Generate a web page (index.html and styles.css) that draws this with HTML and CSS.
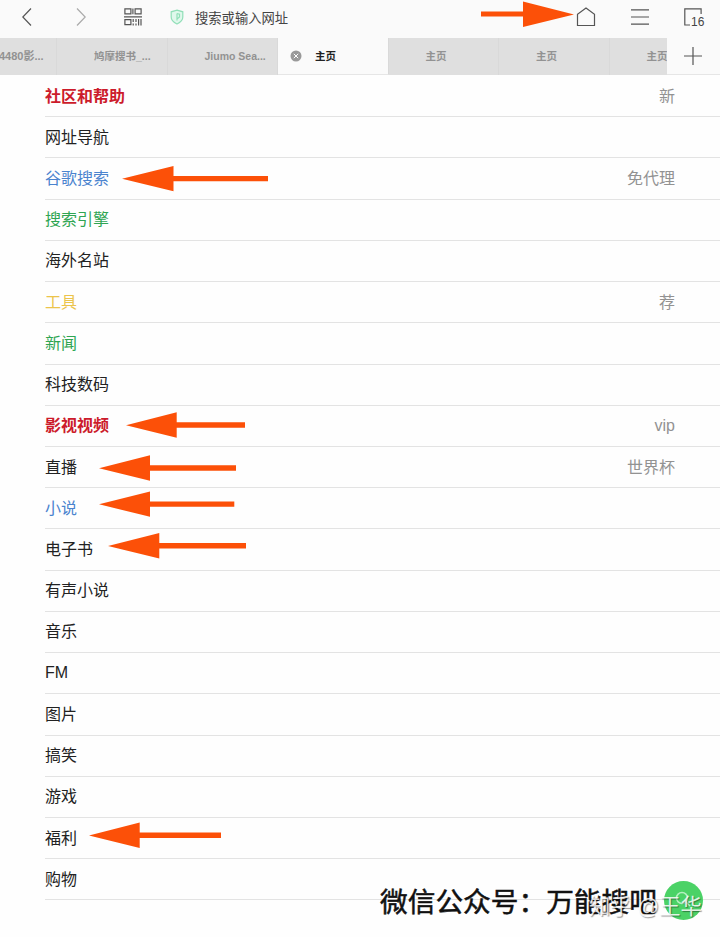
FILE: index.html
```html
<!DOCTYPE html>
<html lang="zh-CN">
<head>
  <meta charset="UTF-8">
  <meta name="viewport" content="width=device-width, initial-scale=1.0">
  <title>主页</title>
  <link rel="stylesheet" href="styles.css">
</head>
<body>
  <!-- 工具栏 -->
  <header class="toolbar">
    <svg class="icon back" width="10" height="18" viewBox="0 0 10 18"><path d="M9 .5.8 9 9 17.5"/></svg>
    <svg class="icon forward" width="10" height="18" viewBox="0 0 10 18"><path d="M1 .5 9.2 9 1 17.5"/></svg>
    <svg class="icon qr" width="18" height="18" viewBox="0 0 18 18">
      <path d="M.9.9h6v5h-6zM11.1.9h6v5h-6zM.9 11.6h6v5h-6zM8.9.5v5.8M0 8.8h18M9.2 11v3M9.2 15.5v2M12 11v3M12 15.5v2M14.6 11v6.5M17 11v6.5"/>
    </svg>
    <svg class="icon shield" width="14" height="16" viewBox="0 0 14 16">
      <path d="M7 1.2 12.800 2.800V8c0 3.200-2.500 5.500-5.800 7C3.700 13.500 1.200 11.200 1.200 8V2.800z"/>
      <path class="shield-mark" d="M7 4.500v7M7 4.500l2.500.8V8L7 10"/>
    </svg>
    <span class="address">搜索或输入网址</span>
    <svg class="icon home" width="20" height="20" viewBox="0 0 20 20"><path d="M1.500 18.500V7.300L10 1l8.500 6.300v11.200z"/></svg>
    <svg class="icon menu" width="18" height="16" viewBox="0 0 18 16"><path d="M0 .8h18M0 8h18M0 15.200h18"/></svg>
    <div class="windows">
      <svg class="icon" width="18" height="18" viewBox="0 0 18 18"><path d="M7 17H.8V.8h16.300V6"/></svg>
      <span class="windows-count">16</span>
    </div>
  </header>

  <!-- 标签页 -->
  <nav class="tabbar">
    <div class="tabs">
      <div class="tab first">4480影...</div>
      <div class="tab">鸠摩搜书_...</div>
      <div class="tab">Jiumo Sea...</div>
      <div class="tab active">
        <svg class="close" width="12" height="12" viewBox="0 0 12 12"><circle cx="6" cy="6" r="5.500"/><path d="m3.800 3.800 4.400 4.400m0-4.400L3.800 8.200"/></svg>
        主页
      </div>
      <div class="tab">主页</div>
      <div class="tab">主页</div>
      <div class="tab">主页</div>
    </div>
    <svg class="icon add" width="18" height="18" viewBox="0 0 18 18"><path d="M0 9h18M9 0v18"/></svg>
  </nav>

  <!-- 分类列表 -->
  <ul class="list">
    <li class="row red"><span>社区和帮助</span><span class="note">新</span></li>
    <li class="row"><span>网址导航</span></li>
    <li class="row blue"><span>谷歌搜索</span><span class="note">免代理</span></li>
    <li class="row green"><span>搜索引擎</span></li>
    <li class="row"><span>海外名站</span></li>
    <li class="row yellow"><span>工具</span><span class="note">荐</span></li>
    <li class="row green"><span>新闻</span></li>
    <li class="row"><span>科技数码</span></li>
    <li class="row red"><span>影视视频</span><span class="note latin">vip</span></li>
    <li class="row"><span>直播</span><span class="note">世界杯</span></li>
    <li class="row blue"><span>小说</span></li>
    <li class="row"><span>电子书</span></li>
    <li class="row"><span>有声小说</span></li>
    <li class="row"><span>音乐</span></li>
    <li class="row"><span class="latin">FM</span></li>
    <li class="row"><span>图片</span></li>
    <li class="row"><span>搞笑</span></li>
    <li class="row"><span>游戏</span></li>
    <li class="row"><span>福利</span></li>
    <li class="row"><span>购物</span></li>
  </ul>

  <!-- 箭头标注 -->
  <svg class="arrows" width="720" height="937" viewBox="0 0 720 937">
    <path d="M574 14.500 523 1.500v10h-42v5h42v10.500z"/>
    <path d="M122 178.700 173.500 166v10H268v5.300h-94.500v10z"/>
    <path d="M126 425.200 176.700 412.300v10H245v5.400h-68.300v10z"/>
    <path d="M99 468.200 150 455.300v10h86v5.400h-86v10z"/>
    <path d="M99 504.300 150 491.400v10h84.300v5.400H150v10z"/>
    <path d="M108 545.900 159.300 533v10h86.700v5.400h-86.700v10z"/>
    <path d="M89 835.500 139.700 822.600v10H221v5.400h-81.300v10z"/>
  </svg>

  <!-- 公众号 -->
  <div class="account">微信公众号：万能搜吧</div>
  <div class="badge">
    <svg width="20" height="20" viewBox="0 0 20 20"><circle cx="9" cy="8" r="5.500"/><path d="m13 12 4 4"/></svg>
  </div>
  <div class="watermark">知乎 @王华</div>
</body>
</html>
```

FILE: styles.css
```css
* { box-sizing: border-box; }
body {
  margin: 0;
  height: 937px;
  position: relative;
  overflow: hidden;
  background: #fefefe;
  color: #222;
  font-family: "Liberation Sans", "Noto Sans CJK SC", sans-serif;
}

/* 工具栏 */
.toolbar {
  display: flex;
  align-items: center;
  height: 38px;
  padding: 0 18px 4px 22px;
  background: #fafafa;
}
.icon {
  flex: none;
  fill: none;
  stroke: #555;
  stroke-width: 1.2;
}
.forward { margin-left: 44px; stroke: #aaa; }
.qr { margin-left: 38px; }
.shield { margin-left: 28px; stroke: #91dfb8; fill: #e0f8ec; }
.shield-mark { fill: none; }
.address {
  flex: 1;
  margin-left: 11px;
  font-size: 13.3px;
  line-height: 20px;
  padding-top: 3px;
  color: #444;
}
.menu { margin: 0 35px; }
.windows { position: relative; height: 18px; }
.windows-count {
  position: absolute;
  left: 6px;
  top: 7px;
  padding-left: 1px;
  background: #fafafa;
  font-size: 12px;
  line-height: 14px;
  color: #444;
}

/* 标签页 */
.tabbar {
  display: flex;
  align-items: center;
  height: 37px;
  background: #fafafa;
  border-bottom: 1px solid #e6e6e6;
}
.tabs {
  display: flex;
  width: 667px;
  height: 37px;
  overflow: hidden;
}
.tab {
  position: relative;
  flex: 0 0 110.5px;
  padding-left: 37px;
  border-right: 1px solid #d9d9d9;
  background: #dfdfdf;
  color: #929292;
  font-size: 10.5px;
  font-weight: bold;
  line-height: 37px;
  white-space: nowrap;
}
.tab.first { flex-basis: 57px; padding-left: 0; font-size: 11px; text-indent: -1px; }
.tab.active { background: #fafafa; color: #222; border-bottom: 1px solid #e6e6e6; }
.close {
  position: absolute;
  left: 12px;
  top: 12px;
  fill: #999;
  stroke: #fff;
}
.close circle { stroke: none; }
.add { margin-left: 17px; }

/* 列表 */
.list {
  margin: 0;
  padding: 1px 0 0 45px;
  list-style: none;
}
.row {
  display: flex;
  justify-content: space-between;
  align-items: center;
  height: 41.23px;
  padding: 0 45px 3px 0;
  border-bottom: 1px solid #e3e3e3;
  font-size: 16px;
}
.red { color: #cc1b2b; font-weight: bold; }
.blue { color: #4a83ce; }
.green { color: #2fa552; }
.yellow { color: #ecc44b; }
.note { color: #929292; font-weight: normal; }
.latin { padding-top: 3px; }

/* 覆盖层 */
.arrows {
  position: absolute;
  left: 0;
  top: 0;
  fill: #fc5008;
}
.account {
  position: absolute;
  left: 380px;
  top: 883px;
  font-size: 27.7px;
  line-height: 40px;
  color: #111;
  -webkit-text-stroke: 0.5px #111;
  white-space: nowrap;
}
.badge {
  position: absolute;
  left: 664px;
  top: 881px;
  width: 39px;
  height: 39px;
  padding: 9px;
  border-radius: 50%;
  background: #4bd266;
}
.badge svg {
  display: block;
  fill: none;
  stroke: #b5f0c0;
  stroke-width: 1.5;
}
.watermark {
  position: absolute;
  left: 589px;
  top: 892px;
  font-size: 21.3px;
  line-height: 30px;
  color: rgba(255, 255, 255, 0.85);
  text-shadow: 1px 1px 1px rgba(0, 0, 0, 0.4);
  white-space: nowrap;
}
```
